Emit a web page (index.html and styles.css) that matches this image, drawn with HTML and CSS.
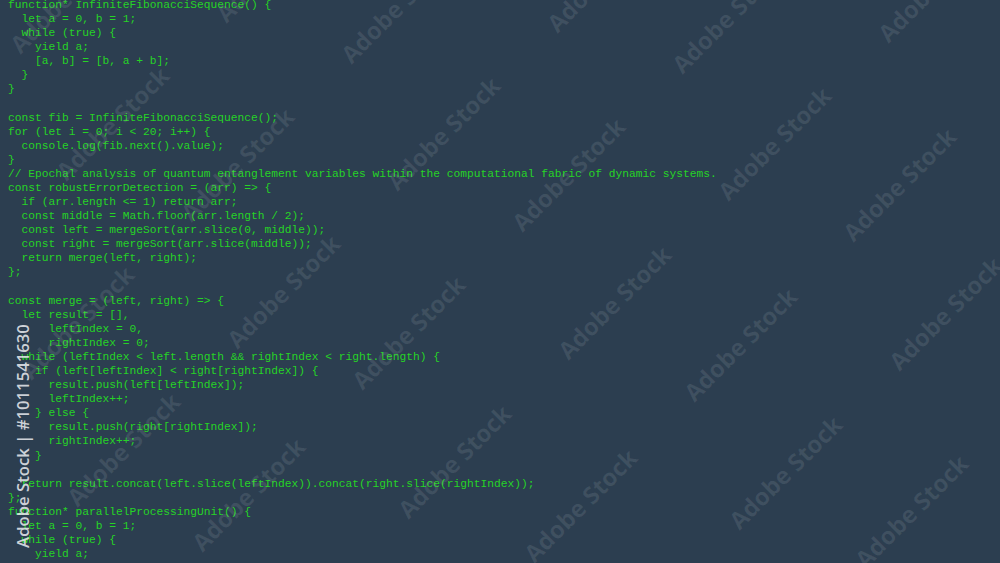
FILE: index.html
```html
<!DOCTYPE html>
<html lang="en">
<head>
    <meta charset="UTF-8">
    <meta name="viewport" content="width=device-width, initial-scale=1.0">
    <title>Code</title>
    <link rel="stylesheet" href="styles.css">
</head>
<body>

  <main class="screen">
<pre class="code">function* InfiniteFibonacciSequence() {
  let a = 0, b = 1;
  while (true) {
    yield a;
    [a, b] = [b, a + b];
  }
}

const fib = InfiniteFibonacciSequence();
for (let i = 0; i &lt; 20; i++) {
  console.log(fib.next().value);
}
// Epochal analysis of quantum entanglement variables within the computational fabric of dynamic systems.
const robustErrorDetection = (arr) =&gt; {
  if (arr.length &lt;= 1) return arr;
  const middle = Math.floor(arr.length / 2);
  const left = mergeSort(arr.slice(0, middle));
  const right = mergeSort(arr.slice(middle));
  return merge(left, right);
};

const merge = (left, right) =&gt; {
  let result = [],
      leftIndex = 0,
      rightIndex = 0;
  while (leftIndex &lt; left.length &amp;&amp; rightIndex &lt; right.length) {
    if (left[leftIndex] &lt; right[rightIndex]) {
      result.push(left[leftIndex]);
      leftIndex++;
    } else {
      result.push(right[rightIndex]);
      rightIndex++;
    }

  return result.concat(left.slice(leftIndex)).concat(right.slice(rightIndex));
};
function* parallelProcessingUnit() {
  let a = 0, b = 1;
  while (true) {
    yield a;</pre>

    <div class="marks">
      <span class="mark" style="left: 66px; top: -4px">Adobe Stock</span>
      <span class="mark" style="left: 272px; top: -35px">Adobe Stock</span>
      <span class="mark" style="left: 397px; top: 6px">Adobe Stock</span>
      <span class="mark" style="left: 603px; top: -25px">Adobe Stock</span>
      <span class="mark" style="left: 728px; top: 16px">Adobe Stock</span>
      <span class="mark" style="left: 934px; top: -15px">Adobe Stock</span>

      <span class="mark" style="left: 112px; top: 123px">Adobe Stock</span>
      <span class="mark" style="left: 237px; top: 164px">Adobe Stock</span>
      <span class="mark" style="left: 443px; top: 133px">Adobe Stock</span>
      <span class="mark" style="left: 568px; top: 174px">Adobe Stock</span>
      <span class="mark" style="left: 774px; top: 143px">Adobe Stock</span>
      <span class="mark" style="left: 899px; top: 184px">Adobe Stock</span>

      <span class="mark" style="left: 77px; top: 322px">Adobe Stock</span>
      <span class="mark" style="left: 283px; top: 291px">Adobe Stock</span>
      <span class="mark" style="left: 408px; top: 332px">Adobe Stock</span>
      <span class="mark" style="left: 614px; top: 302px">Adobe Stock</span>
      <span class="mark" style="left: 740px; top: 344px">Adobe Stock</span>
      <span class="mark" style="left: 945px; top: 313px">Adobe Stock</span>

      <span class="mark" style="left: 123px; top: 449px">Adobe Stock</span>
      <span class="mark" style="left: 248px; top: 494px">Adobe Stock</span>
      <span class="mark" style="left: 454px; top: 461px">Adobe Stock</span>
      <span class="mark" style="left: 580px; top: 505px">Adobe Stock</span>
      <span class="mark" style="left: 785px; top: 472px">Adobe Stock</span>
      <span class="mark" style="left: 911px; top: 511px">Adobe Stock</span>

      <span class="mark" style="left: 88px; top: 648px">Adobe Stock</span>
      <span class="mark" style="left: 294px; top: 617px">Adobe Stock</span>
      <span class="mark" style="left: 419px; top: 658px">Adobe Stock</span>
      <span class="mark" style="left: 625px; top: 627px">Adobe Stock</span>
    </div>

    <span class="stock-id">Adobe Stock | #1011541630</span>
  </main>

</body>
</html>
```

FILE: styles.css
```css
* {
    margin: 0;
    padding: 0;
    box-sizing: border-box;
}
html, body {
    width: 100%;
    height: 100%;
    overflow: hidden;
}
body {
    background: #2c3e50;
}
.screen {
    position: relative;
    width: 100%;
    height: 100%;
    overflow: hidden;
}
.code {
    margin-top: -2px;
    padding-left: 8px;
    font-family: 'Liberation Mono', 'Courier New', monospace;
    font-size: 11.25px;
    line-height: 14.08px;
    color: #26d326;
    white-space: pre;
}
.marks {
    position: absolute;
    inset: 0;
    pointer-events: none;
}
.mark {
    position: absolute;
    transform: translate(-50%, -50%) rotate(-45deg);
    font-family: 'Open Sans', 'DejaVu Sans', sans-serif;
    font-weight: 700;
    font-size: 24px;
    white-space: nowrap;
    color: rgba(255, 255, 255, 0.09);
}
.stock-id {
    position: absolute;
    left: 22px;
    top: 436px;
    transform: translate(-50%, -50%) rotate(-90deg);
    font-family: 'Open Sans', 'DejaVu Sans', sans-serif;
    font-weight: 600;
    font-size: 16.7px;
    white-space: nowrap;
    color: rgba(235, 237, 240, 0.85);
}
```
